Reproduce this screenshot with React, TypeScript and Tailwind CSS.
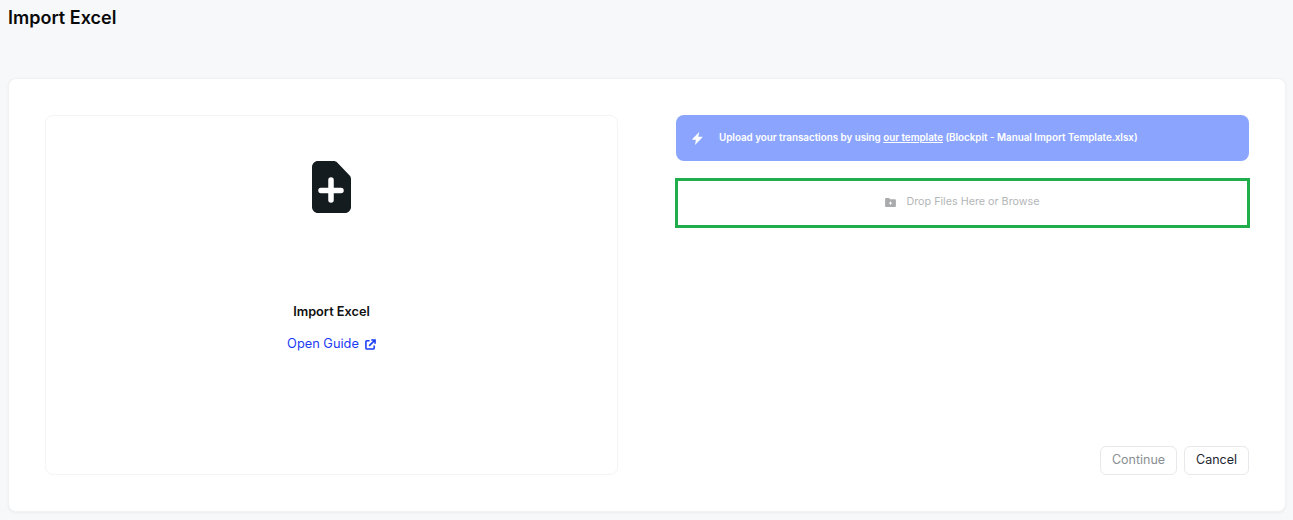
function FileAddIcon() {
  return (
    <svg width="39" height="52" viewBox="0 0 39 52" className="block">
      <path
        d="M6 0H21.5C23 0 24.2 .5 25.2 1.5L37.4 14.2C38.5 15.3 39 16.5 39 18V46C39 49.3 36.3 52 33 52H6C2.7 52 0 49.3 0 46V6C0 2.7 2.7 0 6 0Z"
        fill="#141c20"
      />
      <path d="M19 19V39M9 29.5H29" stroke="#fff" strokeWidth="5.5" strokeLinecap="round" />
    </svg>
  );
}

function BoltIcon() {
  return (
    <svg width="11" height="13" viewBox="0 0 11 13" className="block">
      <path d="M7.2 0L.4 7C.1 7.4.3 7.8.7 7.8H3.9L3 13 10.3 5.4C10.6 5 10.4 4.7 10 4.7H6.3L7.2 0Z" fill="#fff" />
    </svg>
  );
}

function FolderIcon() {
  return (
    <svg width="11" height="9" viewBox="0 0 12 10" className="block">
      <path
        d="M1.2 0H4.4L5.6 1.3H10.8C11.5 1.3 12 1.8 12 2.5V8.8C12 9.5 11.5 10 10.8 10H1.2C.5 10 0 9.5 0 8.8V1.2C0 .5.5 0 1.2 0Z"
        fill="#a9abac"
      />
      <path d="M6 3.9V7.5M4.2 5.7H7.8" stroke="#fff" strokeWidth="1" />
    </svg>
  );
}

function LinkOutIcon() {
  return (
    <svg width="11" height="11" viewBox="0 0 12 12" fill="none" stroke="#1a3cf5" strokeWidth="1.7" className="block">
      <path d="M5 2H2.2C1.5 2 1 2.5 1 3.2V9.8C1 10.5 1.5 11 2.2 11H8.8C9.5 11 10 10.5 10 9.8V7" />
      <path d="M4.5 7.5L10.5 1.5M6.8 1H11V5.2" />
    </svg>
  );
}

export default function App() {
  return (
    <div className="h-[520px] overflow-hidden bg-[#f7f8fa] font-['Inter',sans-serif]">
      {/* HEADER */}
      <h1 className="pl-2 pt-2 text-[18px] leading-5 font-semibold text-[#0a0a0a]">Import Excel</h1>

      {/* CARD */}
      <div className="ml-[8px] mr-[7px] mt-[50px] flex h-[434px] gap-[58px] rounded-lg border border-[#f1f2f4] bg-white p-9 shadow-[0_1px_3px_rgba(0,0,0,0.05)]">
        {/* LEFT PANEL */}
        <div className="flex h-[360px] w-[573px] flex-col items-center rounded-lg border border-[#f3f4f6] pt-[45px]">
          <FileAddIcon />
          <p className="mt-[89px] text-[12.75px] leading-5 font-semibold text-[#111]">Import Excel</p>
          <a className="mt-3 flex items-center gap-[6px] text-[12.8px] leading-5 text-[#1a3cf5]">
            Open Guide
            <LinkOutIcon />
          </a>
        </div>

        {/* RIGHT COLUMN */}
        <div className="flex h-[360px] w-[573px] flex-col">
          <div className="flex h-[46px] items-center rounded-lg bg-[#8ba5ff] pl-[16px] text-[9.8px] font-semibold text-white">
            <BoltIcon />
            <span className="ml-[16px]">
              Upload your transactions by using <u>our template</u> (Blockpit - Manual Import Template.xlsx)
            </span>
          </div>

          <div className="-mx-px mt-[17px] flex h-[50px] items-center justify-center gap-[10px] border-[3px] border-[#1fae4b] bg-white pb-[2px] text-[10.75px] text-[#b3b6b8]">
            <FolderIcon />
            Drop Files Here or Browse
          </div>

          <div className="mt-auto flex justify-end gap-[7px]">
            <button className="h-[29px] w-[77px] rounded-md border border-[#e6e8eb] text-[12.5px] text-[#8a8f93]">
              Continue
            </button>
            <button className="h-[29px] w-[65px] rounded-md border border-[#e6e8eb] text-[12.5px] text-[#1c2530]">
              Cancel
            </button>
          </div>
        </div>
      </div>
    </div>
  );
}
